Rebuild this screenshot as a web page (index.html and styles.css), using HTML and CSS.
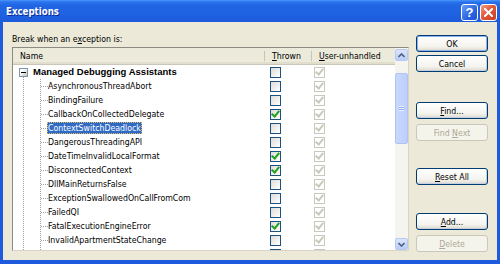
FILE: index.html
```html
<!DOCTYPE html>
<html>
<head>
<meta charset="UTF-8">
<title>Exceptions</title>
<link rel="stylesheet" href="styles.css">
</head>
<body>
<div class="window">
  <div class="titlebar">
    <span class="title">Exceptions</span>
    <div class="caption-buttons">
      <span class="cap help">?</span>
      <span class="cap close">
        <svg width="9" height="9" viewBox="0 0 9 9"><path d="M1 1 L8 8 M8 1 L1 8" stroke="#fff" stroke-width="2" stroke-linecap="square"/></svg>
      </span>
    </div>
  </div>

  <div class="client">
    <div class="main">
      <div class="label">Break when an e<u>x</u>ception is:</div>
      <div class="listview">
        <div class="list-body">
          <div class="header">
            <div class="col">Name</div>
            <div class="col"><u>T</u>hrown</div>
            <div class="col"><u>U</u>ser-unhandled</div>
          </div>

          <div class="row root">
            <div class="cell name"><span class="expander"></span><span class="text">Managed Debugging Assistants</span></div>
            <div class="cell thrown"><span class="cb"></span></div>
            <div class="cell user"><span class="cb off on"></span></div>
          </div>
          <div class="row child">
            <div class="cell name"><span class="text">AsynchronousThreadAbort</span></div>
            <div class="cell thrown"><span class="cb"></span></div>
            <div class="cell user"><span class="cb off on"></span></div>
          </div>
          <div class="row child">
            <div class="cell name"><span class="text">BindingFailure</span></div>
            <div class="cell thrown"><span class="cb"></span></div>
            <div class="cell user"><span class="cb off on"></span></div>
          </div>
          <div class="row child">
            <div class="cell name"><span class="text">CallbackOnCollectedDelegate</span></div>
            <div class="cell thrown"><span class="cb on"></span></div>
            <div class="cell user"><span class="cb off on"></span></div>
          </div>
          <div class="row child">
            <div class="cell name"><span class="text selected">ContextSwitchDeadlock</span></div>
            <div class="cell thrown"><span class="cb"></span></div>
            <div class="cell user"><span class="cb off on"></span></div>
          </div>
          <div class="row child">
            <div class="cell name"><span class="text">DangerousThreadingAPI</span></div>
            <div class="cell thrown"><span class="cb"></span></div>
            <div class="cell user"><span class="cb off on"></span></div>
          </div>
          <div class="row child">
            <div class="cell name"><span class="text">DateTimeInvalidLocalFormat</span></div>
            <div class="cell thrown"><span class="cb on"></span></div>
            <div class="cell user"><span class="cb off on"></span></div>
          </div>
          <div class="row child">
            <div class="cell name"><span class="text">DisconnectedContext</span></div>
            <div class="cell thrown"><span class="cb on"></span></div>
            <div class="cell user"><span class="cb off on"></span></div>
          </div>
          <div class="row child">
            <div class="cell name"><span class="text">DllMainReturnsFalse</span></div>
            <div class="cell thrown"><span class="cb"></span></div>
            <div class="cell user"><span class="cb off on"></span></div>
          </div>
          <div class="row child">
            <div class="cell name"><span class="text">ExceptionSwallowedOnCallFromCom</span></div>
            <div class="cell thrown"><span class="cb"></span></div>
            <div class="cell user"><span class="cb off on"></span></div>
          </div>
          <div class="row child">
            <div class="cell name"><span class="text">FailedQI</span></div>
            <div class="cell thrown"><span class="cb"></span></div>
            <div class="cell user"><span class="cb off on"></span></div>
          </div>
          <div class="row child">
            <div class="cell name"><span class="text">FatalExecutionEngineError</span></div>
            <div class="cell thrown"><span class="cb on"></span></div>
            <div class="cell user"><span class="cb off on"></span></div>
          </div>
          <div class="row child">
            <div class="cell name"><span class="text">InvalidApartmentStateChange</span></div>
            <div class="cell thrown"><span class="cb"></span></div>
            <div class="cell user"><span class="cb off on"></span></div>
          </div>
          <!-- next row is scrolled mostly out of view -->
          <div class="row child">
            <div class="cell name"></div>
            <div class="cell thrown"><span class="cb"></span></div>
            <div class="cell user"><span class="cb off on"></span></div>
          </div>
        </div>

        <div class="scrollbar">
          <span class="sb-btn">
            <svg width="7" height="5" viewBox="0 0 7 5"><path d="M0.5 4 L3.5 1 L6.5 4" fill="none" stroke="#4d6185" stroke-width="1.6"/></svg>
          </span>
          <span class="sb-thumb"><span class="grip"></span></span>
          <span class="sb-btn down">
            <svg width="7" height="5" viewBox="0 0 7 5"><path d="M0.5 1 L3.5 4 L6.5 1" fill="none" stroke="#4d6185" stroke-width="1.6"/></svg>
          </span>
        </div>
      </div>
    </div>

    <div class="buttons">
      <button class="btn default ok">OK</button>
      <button class="btn cancel">Cancel</button>
      <button class="btn find"><u>F</u>ind...</button>
      <button class="btn find-next" disabled>Find <u>N</u>ext</button>
      <button class="btn reset"><u>R</u>eset All</button>
      <button class="btn add"><u>A</u>dd...</button>
      <button class="btn delete" disabled><u>D</u>elete</button>
    </div>
  </div>
</div>
</body>
</html>
```

FILE: styles.css
```css
* {
  box-sizing: border-box;
}

body {
  margin: 0;
  background: #fff;
  font-family: "DejaVu Sans Condensed", "DejaVu Sans", "Liberation Sans", sans-serif;
  font-size: 8.7px;
  color: #000;
}

u {
  text-decoration: underline;
  text-underline-offset: 1px;
}

/* window frame */
.window {
  width: 500px;
  height: 264px;
  display: flex;
  flex-direction: column;
  overflow: hidden;
}

.titlebar {
  height: 22px;
  flex: none;
  display: flex;
  align-items: center;
  justify-content: space-between;
  padding: 0 3px 0 6px;
  background: linear-gradient(#4a97fb 0, #2a72ec 2px, #2065e4 6px, #1f62e2 60%, #1d5bdb 100%);
}

.title {
  color: #fff;
  font-weight: bold;
  font-size: 9.6px;
  text-shadow: 1px 1px 0 #0a2a9a;
  margin-top: 1px;
}

.caption-buttons {
  display: flex;
  gap: 2px;
  margin-top: 3px;
}

.cap {
  width: 17px;
  height: 17px;
  border: 1px solid #fff;
  border-radius: 3px;
  display: flex;
  align-items: center;
  justify-content: center;
}

.help {
  background: linear-gradient(135deg, #6b9cf6, #2a64e0 60%, #1c54d6);
  color: #fff;
  font-family: "Liberation Sans", sans-serif;
  font-weight: bold;
  font-size: 13px;
}

.close {
  background: linear-gradient(135deg, #f0a08a, #e0593a 45%, #c9401f);
}

.client {
  flex: 1;
  display: flex;
  gap: 7px;
  padding: 11px 9px 0 9px;
  background: #ece9d8;
  border: solid #1d5ade;
  border-width: 0 3px 4px 3px;
}

/* left part: label + list */
.main {
  width: 397px;
  flex: none;
}

.label {
  height: 14px;
  line-height: 12px;
}

.listview {
  height: 204px;
  display: flex;
  border: 1px solid;
  border-color: #8b8a83 #d8d5c6 #d8d5c6 #8b8a83;
  background: #fff;
  overflow: hidden;
}

.list-body {
  flex: 1;
  overflow: hidden;
}

.header,
.row {
  display: grid;
  grid-template-columns: 252px 47px 83px;
}

.header {
  height: 17px;
  background: #ebeadb;
  border-bottom: 1px solid #cbc7b8;
  box-shadow: inset 0 -2px 0 #e2decd;
}

.header .col {
  padding: 1px 0 0 7px;
  line-height: 15px;
  background: linear-gradient(#c7c5b2, #c7c5b2) right 3px / 1px 10px no-repeat;
}

.header .col:last-child {
  background: none;
}

.row {
  height: 14px;
}

.cell {
  display: flex;
  align-items: center;
}

.name .text {
  white-space: nowrap;
  line-height: 12px;
  padding: 0 1px;
}

.root .name {
  padding-left: 6px;
  background: repeating-linear-gradient(#a0a0a0 0 1px, transparent 1px 2px) 10px 12px / 1px 2px no-repeat;
}

.root .text {
  font-family: "Liberation Sans", "DejaVu Sans", sans-serif;
  font-weight: bold;
  font-size: 9.5px;
  margin-left: 4px;
}

.expander {
  width: 9px;
  height: 9px;
  border: 1px solid #7898b5;
  background: linear-gradient(135deg, #fff 30%, #c6c1b1);
  display: flex;
  align-items: center;
  justify-content: center;
}

.expander::after {
  content: "";
  width: 5px;
  height: 1px;
  background: #000;
}

/* dotted tree guides */
.child .name {
  padding-left: 34px;
  background:
    repeating-linear-gradient(#a0a0a0 0 1px, transparent 1px 2px) 10px 0 / 1px 14px no-repeat,
    repeating-linear-gradient(#a0a0a0 0 1px, transparent 1px 2px) 27px 0 / 1px 14px no-repeat,
    repeating-linear-gradient(to right, #a0a0a0 0 1px, transparent 1px 2px) 28px 7px / 7px 1px no-repeat;
}

.text.selected {
  background: #316ac5;
  color: #fff;
  outline: 1px dotted #d8c06a;
  outline-offset: -1px;
}

.thrown {
  padding-left: 5px;
}

.user {
  padding-left: 2px;
}

/* checkboxes */
.cb {
  width: 11px;
  height: 11px;
  border: 1px solid #1c5180;
  background: linear-gradient(135deg, #dcdcd7, #fff);
  display: flex;
  align-items: center;
  justify-content: center;
}

.cb.on::after {
  content: "";
  width: 3px;
  height: 6px;
  margin-top: -2px;
  border: solid #21a121;
  border-width: 0 2px 2px 0;
  transform: rotate(40deg);
}

.cb.off {
  border-color: #cac8bb;
  background: #fff;
}

.cb.off::after {
  border-color: #cac8bb;
}

/* scrollbar */
.scrollbar {
  width: 13px;
  flex: none;
  display: flex;
  flex-direction: column;
  background: #f5f4ef;
  padding: 1px 0 0 0;
}

.sb-btn {
  height: 12px;
  border: 1px solid #b6c9f3;
  border-radius: 2px;
  background: linear-gradient(#dbe6fd, #bacdf8);
  display: flex;
  align-items: center;
  justify-content: center;
}

.sb-btn.down {
  margin-top: auto;
}

.sb-thumb {
  height: 71px;
  margin-top: 12px;
  border: 1px solid #aec3f1;
  border-radius: 2px;
  background: linear-gradient(to right, #c9d8fc, #bccffb);
  display: flex;
  align-items: center;
  justify-content: center;
}

.grip {
  width: 5px;
  height: 5px;
  background: repeating-linear-gradient(#eef3fe 0 1px, #8faaec 1px 2px);
}

/* right buttons */
.buttons {
  width: 72px;
  flex: none;
  display: flex;
  flex-direction: column;
}

.btn {
  height: 17px;
  padding: 0;
  font: inherit;
  color: #000;
  border: 1px solid #003c74;
  border-radius: 3px;
  background: linear-gradient(#fff, #f4f3ee 70%, #dcd8cc);
  box-shadow: inset -1px -1px 0 #c6cfe0;
}

.btn.default {
  box-shadow: inset 0 0 0 1px #8fb0ec;
}

.btn:disabled {
  color: #aca899;
  border-color: #cac8bb;
  background: #f5f4ea;
  box-shadow: none;
}

.ok { margin-top: 2px; }
.cancel { margin-top: 3px; }
.find { margin-top: 30px; }
.find-next { margin-top: 5px; }
.reset { margin-top: 27px; }
.add { margin-top: 28px; }
.delete { margin-top: 5px; }
```
